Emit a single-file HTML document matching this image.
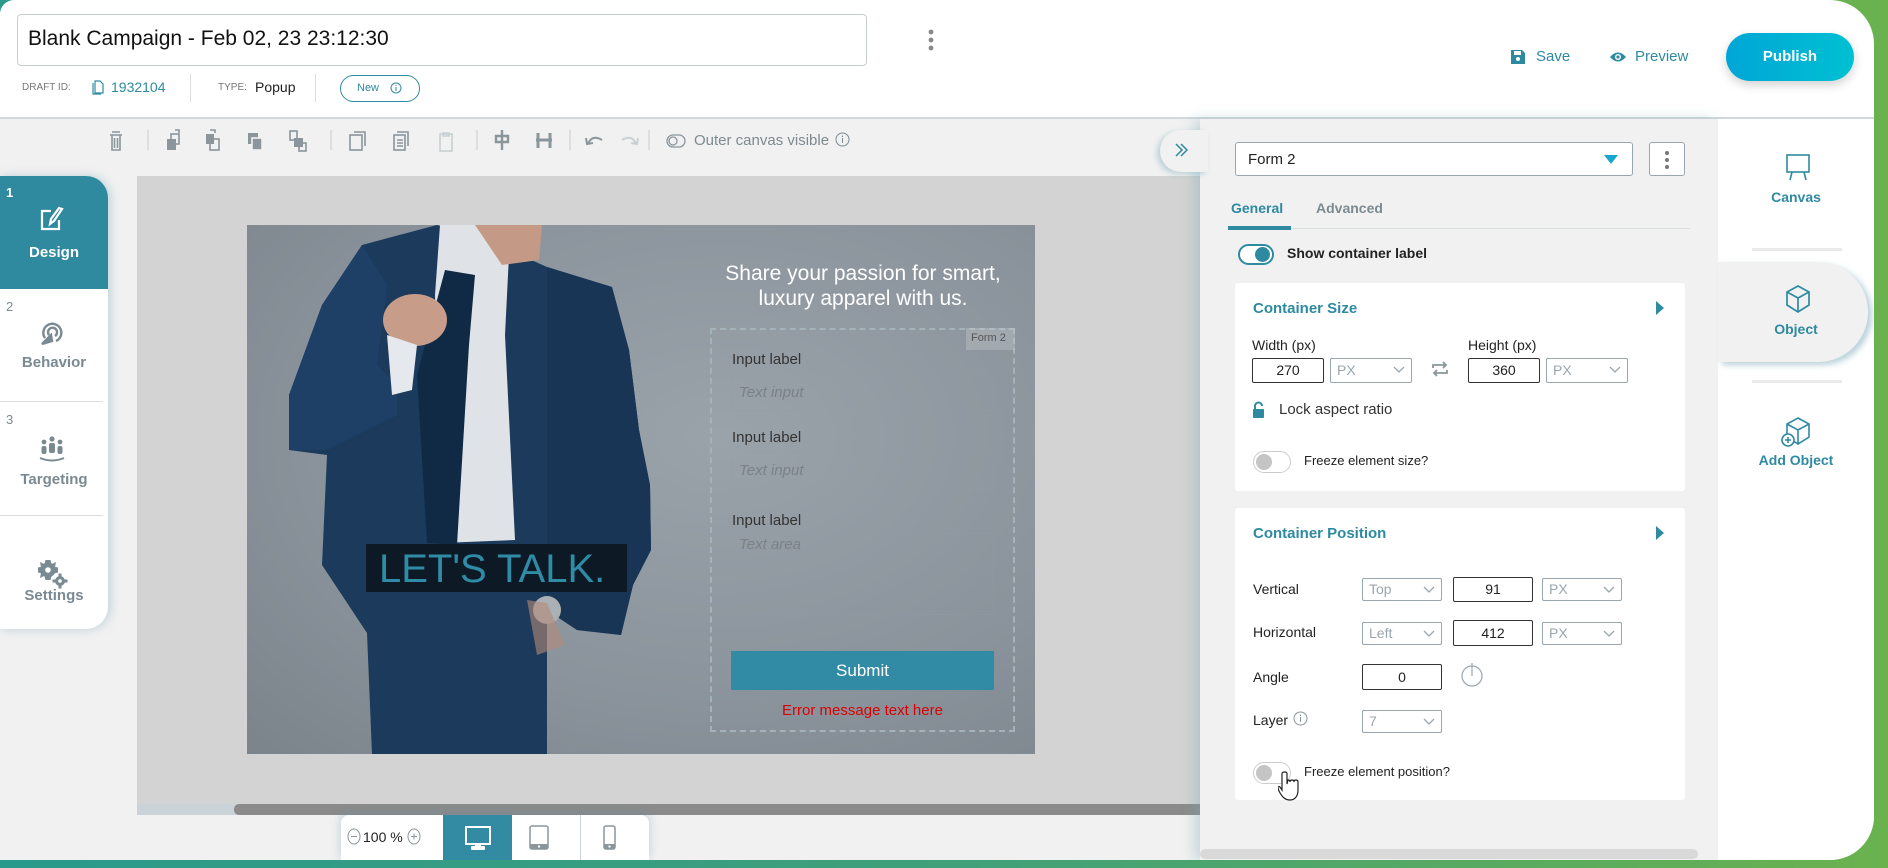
<!DOCTYPE html>
<html><head><meta charset="utf-8">
<style>
*{box-sizing:border-box;margin:0;padding:0}
body{width:1888px;height:868px;overflow:hidden;font-family:"Liberation Sans",sans-serif;background:linear-gradient(90deg,#2a9a8c 0%,#3fa07a 50%,#6bb24f 100%);position:relative}
.a{position:absolute}
#card{position:absolute;left:0;top:0;width:1874px;height:860px;background:#fff;border-radius:14px 44px 44px 0;overflow:hidden}
.t{position:absolute;white-space:nowrap}
.lbl{font-size:14px;color:#222}
.box{position:absolute;border:1px solid #333;border-radius:2px;background:#fff;font-size:14px;text-align:center;color:#222}
.sel{position:absolute;border:1px solid #9aa6ad;border-radius:2px;background:#fff;font-size:14px;color:#9aa6ad;padding-left:6px}
.sel svg{position:absolute;right:6px;top:7px}
.tog{position:absolute;width:38px;height:22px;border-radius:11px;border:1px solid #ccc;background:#fff}
.tog i{position:absolute;left:2px;top:2px;width:16px;height:16px;border-radius:50%;background:#c5c5c5}
.ic{position:absolute}
</style></head><body>
<div id="card">
<!-- header -->
<div class="a" style="left:17px;top:14px;width:850px;height:52px;border:1px solid #c8cdd0;border-radius:4px"></div>
<div class="t" style="left:28px;top:27px;font-size:21px;color:#111">Blank Campaign - Feb 02, 23 23:12:30</div>
<svg class="ic" style="left:926px;top:28px" width="10" height="24"><circle cx="5" cy="4" r="2.4" fill="#888"/><circle cx="5" cy="12" r="2.4" fill="#888"/><circle cx="5" cy="20" r="2.4" fill="#888"/></svg>
<div class="t" style="left:22px;top:82px;font-size:10px;color:#777">DRAFT ID:</div>
<svg class="ic" style="left:92px;top:80px" width="12" height="15"><path d="M3 1h5l3 3v9H3z M1 3v11h8" fill="none" stroke="#2e8aa1" stroke-width="1.2"/></svg>
<div class="t" style="left:111px;top:79px;font-size:14px;color:#2e8aa1">1932104</div>
<div class="a" style="left:190px;top:74px;width:1px;height:28px;background:#ddd"></div>
<div class="t" style="left:218px;top:82px;font-size:10px;color:#777">TYPE:</div>
<div class="t" style="left:255px;top:79px;font-size:14px;color:#222">Popup</div>
<div class="a" style="left:315px;top:74px;width:1px;height:28px;background:#ddd"></div>
<div class="a" style="left:340px;top:75px;width:80px;height:27px;border:1px solid #2e8aa1;border-radius:14px"></div>
<div class="t" style="left:357px;top:82px;font-size:11px;color:#2e8aa1">New</div>
<svg class="ic" style="left:390px;top:82px" width="12" height="12"><circle cx="6" cy="6" r="5" fill="none" stroke="#2e8aa1"/><path d="M6 5v4M6 3v1" stroke="#2e8aa1"/></svg>
<svg class="ic" style="left:1510px;top:49px" width="16" height="16"><path d="M1 1h11l3 3v11H1z" fill="#2e8aa1"/><rect x="4" y="2" width="7" height="4" fill="#fff"/><circle cx="8" cy="10" r="2" fill="#fff"/></svg>
<div class="t" style="left:1536px;top:48px;font-size:15px;color:#2e8aa1">Save</div>
<svg class="ic" style="left:1609px;top:51px" width="18" height="12"><path d="M1 6Q9 -3 17 6Q9 15 1 6z" fill="#2e8aa1"/><circle cx="9" cy="6" r="3" fill="#fff"/><circle cx="9" cy="6" r="1.6" fill="#2e8aa1"/></svg>
<div class="t" style="left:1635px;top:48px;font-size:15px;color:#2e8aa1">Preview</div>
<div class="a" style="left:1726px;top:33px;width:128px;height:48px;border-radius:24px;background:linear-gradient(90deg,#00a6d6,#00c0d2);box-shadow:0 4px 10px rgba(0,0,0,.18)"></div>
<div class="t" style="left:1726px;top:48px;width:128px;text-align:center;font-size:15px;font-weight:bold;color:#fff">Publish</div>
<div class="a" style="left:0;top:117px;width:1874px;height:2px;background:#d0d8dc"></div>

<!-- main area -->
<div class="a" style="left:0;top:119px;width:1200px;height:741px;background:#f1f1f1"></div>
<svg class="a" style="left:100px;top:128px" width="760" height="26" fill="none" stroke="#8a969c" stroke-width="1.6">
<path d="M12 4h8M10 7h12M12 7v15h8V7M14.5 10v10M17.5 10v10"/>
<path d="M48 2v20" stroke="#ccc" stroke-width="1"/>
<rect x="67" y="11" width="9" height="11" fill="#8a969c" stroke="none"/><rect x="71" y="6" width="8" height="10"/><path d="M75 2h4v3"/>
<rect x="110" y="11" width="9" height="11"/><rect x="106" y="6" width="8" height="10" fill="#8a969c" stroke="none"/><path d="M110 2h5v3"/>
<rect x="148" y="5" width="10" height="11" fill="#8a969c" stroke="none"/><rect x="152" y="10" width="10" height="12" fill="#8a969c" stroke="#f1f1f1"/>
<rect x="190" y="3" width="7" height="9"/><rect x="194" y="10" width="9" height="9" fill="#8a969c" stroke="none"/><rect x="199" y="15" width="7" height="8"/>
<path d="M231 2v20" stroke="#ccc" stroke-width="1"/>
<rect x="250" y="7" width="12" height="15"/><path d="M254 4h11v14"/>
<rect x="294" y="7" width="11" height="15"/><path d="M297 4h11v14M297 12h6M297 15h6M297 18h6"/>
<rect x="340" y="6" width="12" height="17" stroke="#c9d0d3"/><path d="M343 5h6v3h-6z" stroke="#c9d0d3"/>
<path d="M377 2v20" stroke="#ccc" stroke-width="1"/>
<path d="M402 2v20M396 8h12v6h-12z" stroke-width="2.4"/>
<path d="M438 5v15M450 5v15M436 12h16" stroke-width="3"/>
<path d="M470 2v20" stroke="#ccc" stroke-width="1"/>
<path d="M488 16q4-10 14-4M486 10l1 6 6-1" stroke-width="2"/>
<path d="M536 16q-4-10-14-4M538 10l-1 6-6-1" stroke="#c9d0d3" stroke-width="2"/>
<path d="M549 2v20" stroke="#ccc" stroke-width="1"/>
</svg>
<svg class="ic" style="left:666px;top:133px" width="20" height="16"><rect x="1" y="2" width="18" height="12" rx="6" fill="none" stroke="#8a969c" stroke-width="1.3"/><circle cx="7" cy="8" r="4" fill="none" stroke="#8a969c" stroke-width="1.3"/></svg>
<div class="t" style="left:694px;top:132px;font-size:15px;color:#7d8a90">Outer canvas visible</div>
<svg class="ic" style="left:835px;top:132px" width="15" height="15"><circle cx="7.5" cy="7.5" r="6.5" fill="none" stroke="#7d8a90"/><path d="M7.5 6v5M7.5 3.5v1.5" stroke="#7d8a90"/></svg>

<!-- canvas -->
<div class="a" style="left:137px;top:176px;width:1063px;height:628px;background:#d3d3d3"></div>
<div class="a" style="left:137px;top:804px;width:1063px;height:11px;background:#c9d3d8"></div>
<div class="a" style="left:234px;top:804px;width:966px;height:11px;background:#8b8b8b;border-radius:5px 0 0 5px"></div>

<!-- popup -->
<div class="a" style="left:247px;top:225px;width:788px;height:529px;overflow:hidden;background:radial-gradient(ellipse at 60% 40%,#9aa2aa 0%,#8a939b 60%,#7b838b 100%)">
<svg class="a" style="left:0;top:0" width="788" height="529">
<path d="M115 20L190 0L262 25L300 42L365 62L382 125L392 205L403 260L404 325L386 360L374 410L330 405L300 385L300 529L125 529L120 408L75 340L80 230L42 225L42 170L75 80Z" fill="#1b3a5c"/>
<path d="M42 170L75 80L115 20L140 60L130 140L150 160L150 190L80 225L42 225Z" fill="#1e4067"/>
<path d="M300 42L365 62L382 125L392 205L403 260L404 325L386 360L374 410L330 405L300 385Z" fill="#193555"/>
<path d="M193 0L245 0L262 30L258 110L268 315L195 318L188 70Z" fill="#dfe3e8"/>
<path d="M198 45L228 50L222 120L210 320L180 318L170 150Z" fill="#102a45"/>
<path d="M228 0L295 0L292 35L255 40Z" fill="#c49a86"/>
<ellipse cx="168" cy="95" rx="32" ry="26" fill="#c79c88"/>
<path d="M140 110L170 120L165 165L145 170Z" fill="#e5e8ec"/>
<ellipse cx="300" cy="385" rx="14" ry="14" fill="#aab0b4"/>
<path d="M280 375L300 378L318 420L290 430Z" fill="#b48a78" opacity=".6"/>
</svg>
<div class="a" style="left:119px;top:319px;width:261px;height:48px;background:#0d1a26"></div>
<div class="t" style="left:132px;top:322px;font-size:40px;color:#2f8ba6;letter-spacing:0px">LET'S TALK.</div>
<div class="t" style="left:456px;top:36px;width:320px;text-align:center;font-size:21px;line-height:25px;color:#fff">Share your passion for smart,<br>luxury apparel with us.</div>
<div class="a" style="left:463px;top:103px;width:305px;height:404px;border:2px dashed #a4b2ba"></div>
<div class="a" style="left:719px;top:103px;width:49px;height:22px;background:rgba(200,205,210,.35)"></div>
<div class="t" style="left:724px;top:107px;font-size:11px;color:#555">Form 2</div>
<div class="t" style="left:485px;top:126px;font-size:15px;color:#333">Input label</div>
<div class="a" style="left:485px;top:147px;width:262px;height:39px;border:1px solid rgba(140,160,170,.35)"></div>
<div class="t" style="left:492px;top:159px;font-size:15px;font-style:italic;color:#7a8288">Text input</div>
<div class="t" style="left:485px;top:204px;font-size:15px;color:#333">Input label</div>
<div class="a" style="left:485px;top:226px;width:262px;height:39px;border:1px solid rgba(140,160,170,.35)"></div>
<div class="t" style="left:492px;top:237px;font-size:15px;font-style:italic;color:#7a8288">Text input</div>
<div class="t" style="left:485px;top:287px;font-size:15px;color:#333">Input label</div>
<div class="a" style="left:485px;top:308px;width:262px;height:82px;border:1px solid rgba(140,160,170,.35)"></div>
<div class="t" style="left:492px;top:311px;font-size:15px;font-style:italic;color:#7a8288">Text area</div>
<div class="a" style="left:484px;top:426px;width:263px;height:39px;background:#318ba5"></div>
<div class="t" style="left:484px;top:436px;width:263px;text-align:center;font-size:17px;color:#fff">Submit</div>
<div class="t" style="left:463px;top:477px;width:305px;text-align:center;font-size:15px;color:#d00">Error message text here</div>
</div>

<!-- left nav -->
<div class="a" style="left:0;top:176px;width:108px;height:453px;background:#fff;border-radius:0 22px 22px 0;box-shadow:2px 0 10px rgba(90,150,170,.35);overflow:hidden">
<div class="a" style="left:0;top:0;width:108px;height:113px;background:#2f8aa0"></div>
<div class="t" style="left:6px;top:9px;font-size:13px;font-weight:bold;color:#fff">1</div>
<svg class="ic" style="left:37px;top:30px" width="30" height="30" fill="none" stroke="#fff" stroke-width="2.2"><path d="M14 5H5v18h17v-9"/><path d="M25 3l-8 12-4 3 1-5 8-11z"/></svg>
<div class="t" style="left:0;top:68px;width:108px;text-align:center;font-size:15px;font-weight:bold;color:#fff">Design</div>
<div class="t" style="left:6px;top:123px;font-size:13px;color:#7a8a92">2</div>
<svg class="ic" style="left:39px;top:144px" width="26" height="26" fill="none" stroke="#7a8a92" stroke-width="2.4"><path d="M6 18A9 9 0 1 1 17 21"/><path d="M10 15A4.5 4.5 0 1 1 16 16"/><path d="M3 24l9-9 1 6z" fill="#7a8a92"/></svg>
<div class="t" style="left:0;top:178px;width:108px;text-align:center;font-size:15px;font-weight:bold;color:#7a8a92">Behavior</div>
<div class="a" style="left:0;top:225px;width:103px;height:1px;background:#ddd"></div>
<div class="t" style="left:6px;top:236px;font-size:13px;color:#7a8a92">3</div>
<svg class="ic" style="left:38px;top:260px" width="28" height="26" fill="#7a8a92"><circle cx="14" cy="3" r="2.6"/><circle cx="6" cy="6" r="2.4"/><circle cx="22" cy="6" r="2.4"/><rect x="11" y="7" width="6" height="10" rx="2"/><rect x="3.5" y="10" width="5" height="8" rx="2"/><rect x="19.5" y="10" width="5" height="8" rx="2"/><path d="M2 22q12 5 24 0" fill="none" stroke="#7a8a92" stroke-width="2"/></svg>
<div class="t" style="left:0;top:295px;width:108px;text-align:center;font-size:15px;font-weight:bold;color:#7a8a92">Targeting</div>
<div class="a" style="left:0;top:339px;width:103px;height:1px;background:#ddd"></div>
<svg class="ic" style="left:36px;top:383px" width="32" height="30" fill="#7a8a92"><circle cx="12" cy="11" r="7.5"/><circle cx="12" cy="11" r="2.8" fill="#fff"/><path d="M9.5 1h5l1 4h-7zM9.5 21h5l1-4h-7zM2 8.5v5l4 1v-7zM22 8.5v5l-4 1v-7zM4 3l4 2-3 3zM20 3l-4 2 3 3zM4 19l4-2-3-3z"/><circle cx="24" cy="22" r="5"/><circle cx="24" cy="22" r="1.8" fill="#fff"/><path d="M22.5 14.5h3v3h-3zM22.5 26.5h3v3h-3zM16.5 20.5h3v3h-3zM28.5 20.5h3v3h-3z"/></svg>
<div class="t" style="left:0;top:411px;width:108px;text-align:center;font-size:15px;font-weight:bold;color:#7a8a92">Settings</div>
</div>

<!-- bottom device bar -->
<div class="a" style="left:341px;top:815px;width:308px;height:45px;background:#fff;border-radius:8px 8px 0 0;box-shadow:0 -2px 10px rgba(90,140,160,.35);overflow:hidden">
<svg class="ic" style="left:6px;top:13px" width="14" height="17"><ellipse cx="7" cy="8.5" rx="6" ry="7.5" fill="none" stroke="#8a969c"/><path d="M4 8.5h6" stroke="#8a969c"/></svg>
<div class="t" style="left:22px;top:14px;font-size:14px;color:#222">100 %</div>
<svg class="ic" style="left:66px;top:13px" width="14" height="17"><ellipse cx="7" cy="8.5" rx="6" ry="7.5" fill="none" stroke="#8a969c"/><path d="M4 8.5h6M7 5.5v6" stroke="#8a969c"/></svg>
<div class="a" style="left:102px;top:0;width:69px;height:45px;background:#338aa3"></div>
<svg class="ic" style="left:123px;top:11px" width="28" height="25"><rect x="2" y="1" width="24" height="17" fill="none" stroke="#fff" stroke-width="2"/><rect x="11" y="18" width="6" height="3" fill="#fff"/><rect x="7" y="20" width="14" height="4" rx="1" fill="#fff"/></svg>
<svg class="ic" style="left:186px;top:10px" width="24" height="25"><rect x="3" y="1" width="18" height="23" rx="2" fill="none" stroke="#8a969c" stroke-width="1.5"/><rect x="3" y="19" width="18" height="5" fill="#8a969c"/><rect x="11" y="20.5" width="2" height="2" fill="#fff"/></svg>
<div class="a" style="left:239px;top:0;width:1px;height:45px;background:#c9d3d8"></div>
<svg class="ic" style="left:261px;top:10px" width="16" height="25"><rect x="2" y="1" width="11" height="23" rx="2" fill="none" stroke="#8a969c" stroke-width="1.5"/><rect x="2" y="19" width="11" height="5" fill="#8a969c"/><rect x="6.5" y="20.5" width="2" height="2" fill="#fff"/></svg>
</div>

<!-- right panel -->
<div class="a" style="left:1200px;top:119px;width:518px;height:741px;background:#f1f1f1;box-shadow:-6px 0 12px rgba(120,170,185,.35)"></div>
<div class="a" style="left:1160px;top:130px;width:48px;height:42px;background:#f1f1f1;border-radius:21px 0 0 21px;box-shadow:-3px 2px 6px rgba(120,170,185,.45)"></div>
<svg class="ic" style="left:1173px;top:142px" width="16" height="16" fill="none" stroke="#2e8aa1" stroke-width="1.5"><path d="M3 2l6 6-6 6M8 2l6 6-6 6"/></svg>
<div class="a" style="left:1235px;top:142px;width:398px;height:34px;border:1px solid #9aa6ad;border-radius:3px;background:#fff"></div>
<div class="t" style="left:1248px;top:151px;font-size:15px;color:#222">Form 2</div>
<svg class="ic" style="left:1604px;top:155px" width="14" height="9"><path d="M0 0h14L7 9z" fill="#17a6d1"/></svg>
<div class="a" style="left:1649px;top:142px;width:36px;height:34px;border:1px solid #9aa6ad;border-radius:3px;background:#fff"></div>
<svg class="ic" style="left:1664px;top:150px" width="6" height="20" fill="#777"><circle cx="3" cy="3" r="2"/><circle cx="3" cy="10" r="2"/><circle cx="3" cy="17" r="2"/></svg>
<div class="t" style="left:1231px;top:200px;font-size:14px;font-weight:bold;color:#2e8aa1">General</div>
<div class="t" style="left:1316px;top:200px;font-size:14px;font-weight:bold;color:#7d8a90">Advanced</div>
<div class="a" style="left:1228px;top:228px;width:462px;height:1px;background:#d8dde0"></div>
<div class="a" style="left:1228px;top:226px;width:63px;height:4px;background:#2e8aa1"></div>
<div class="a" style="left:1238px;top:244px;width:36px;height:21px;border-radius:11px;border:2px solid #2e8aa1;background:#fff"></div>
<div class="a" style="left:1255px;top:247px;width:15px;height:15px;border-radius:50%;background:#2e8aa1"></div>
<div class="t" style="left:1287px;top:245px;font-size:14px;font-weight:bold;color:#222">Show container label</div>

<div class="a" style="left:1235px;top:283px;width:450px;height:208px;background:#fff;border-radius:3px"></div>
<div class="t" style="left:1253px;top:300px;font-size:15px;font-weight:bold;color:#2e8aa1">Container Size</div>
<svg class="ic" style="left:1656px;top:301px" width="8" height="14"><path d="M0 0l8 7-8 7z" fill="#2e8aa1"/></svg>
<div class="t lbl" style="left:1252px;top:337px">Width (px)</div>
<div class="t lbl" style="left:1468px;top:337px">Height (px)</div>
<div class="box" style="left:1252px;top:358px;width:72px;height:25px;line-height:23px">270</div>
<div class="sel" style="left:1330px;top:358px;width:82px;height:25px;line-height:23px">PX<svg width="12" height="8"><path d="M1 1l5 5 5-5" fill="none" stroke="#9aa6ad" stroke-width="1.3"/></svg></div>
<svg class="ic" style="left:1431px;top:360px" width="18" height="18" fill="none" stroke="#8a969c" stroke-width="1.8"><path d="M2 8V5h13M12 2l3 3-3 3M16 10v3H3M6 16l-3-3 3-3"/></svg>
<div class="box" style="left:1468px;top:358px;width:72px;height:25px;line-height:23px">360</div>
<div class="sel" style="left:1546px;top:358px;width:82px;height:25px;line-height:23px">PX<svg width="12" height="8"><path d="M1 1l5 5 5-5" fill="none" stroke="#9aa6ad" stroke-width="1.3"/></svg></div>
<svg class="ic" style="left:1252px;top:401px" width="13" height="18"><path d="M3 8V5a3.5 3.5 0 0 1 7 0" fill="none" stroke="#2e8aa1" stroke-width="2"/><rect x="1" y="8" width="11" height="9" rx="1" fill="#2e8aa1"/></svg>
<div class="t" style="left:1279px;top:401px;font-size:15px;color:#333">Lock aspect ratio</div>
<div class="tog" style="left:1253px;top:451px"><i></i></div>
<div class="t" style="left:1304px;top:453px;font-size:13px;color:#222">Freeze element size?</div>

<div class="a" style="left:1235px;top:508px;width:450px;height:292px;background:#fff;border-radius:3px"></div>
<div class="t" style="left:1253px;top:525px;font-size:15px;font-weight:bold;color:#2e8aa1">Container Position</div>
<svg class="ic" style="left:1656px;top:526px" width="8" height="14"><path d="M0 0l8 7-8 7z" fill="#2e8aa1"/></svg>
<div class="t lbl" style="left:1253px;top:581px">Vertical</div>
<div class="sel" style="left:1362px;top:578px;width:80px;height:23px;line-height:21px">Top<svg width="12" height="8"><path d="M1 1l5 5 5-5" fill="none" stroke="#9aa6ad" stroke-width="1.3"/></svg></div>
<div class="box" style="left:1453px;top:577px;width:80px;height:25px;line-height:23px">91</div>
<div class="sel" style="left:1542px;top:578px;width:80px;height:23px;line-height:21px">PX<svg width="12" height="8"><path d="M1 1l5 5 5-5" fill="none" stroke="#9aa6ad" stroke-width="1.3"/></svg></div>
<div class="t lbl" style="left:1253px;top:624px">Horizontal</div>
<div class="sel" style="left:1362px;top:622px;width:80px;height:23px;line-height:21px">Left<svg width="12" height="8"><path d="M1 1l5 5 5-5" fill="none" stroke="#9aa6ad" stroke-width="1.3"/></svg></div>
<div class="box" style="left:1453px;top:620px;width:80px;height:26px;line-height:24px">412</div>
<div class="sel" style="left:1542px;top:622px;width:80px;height:23px;line-height:21px">PX<svg width="12" height="8"><path d="M1 1l5 5 5-5" fill="none" stroke="#9aa6ad" stroke-width="1.3"/></svg></div>
<div class="t lbl" style="left:1253px;top:669px">Angle</div>
<div class="box" style="left:1362px;top:664px;width:80px;height:26px;line-height:24px">0</div>
<svg class="ic" style="left:1460px;top:662px" width="24" height="26"><circle cx="12" cy="14" r="10" fill="none" stroke="#9aa6ad" stroke-width="1.2"/><path d="M12 1v13" stroke="#9aa6ad" stroke-width="1.2"/></svg>
<div class="t lbl" style="left:1253px;top:712px">Layer</div>
<svg class="ic" style="left:1293px;top:711px" width="15" height="15"><circle cx="7.5" cy="7.5" r="6.5" fill="none" stroke="#8a969c"/><path d="M7.5 6v5M7.5 3.5v1.5" stroke="#8a969c"/></svg>
<div class="sel" style="left:1362px;top:710px;width:80px;height:23px;line-height:21px">7<svg width="12" height="8"><path d="M1 1l5 5 5-5" fill="none" stroke="#9aa6ad" stroke-width="1.3"/></svg></div>
<div class="tog" style="left:1253px;top:762px"><i></i></div>
<div class="t" style="left:1304px;top:764px;font-size:13px;color:#222">Freeze element position?</div>
<svg class="ic" style="left:1278px;top:770px" width="24" height="34"><path d="M7 2c1.5 0 2 1 2 2v10l1-4c1.5 0 2 1 2 2 0-1 .5-2 2-2s2 1 2 2c0-1 .5-2 2-2s2 1 2 2v8c0 6-3 10-8 10s-8-3-11-9l-1-3c0-1 1-2 2-1l2 3V4c0-1 .5-2 2-2z" fill="#fff" stroke="#222" stroke-width="1.2"/></svg>
<div class="a" style="left:1200px;top:849px;width:498px;height:10px;background:#d9d9d9;border-radius:5px"></div>

<!-- far right nav -->
<div class="a" style="left:1718px;top:119px;width:156px;height:741px;background:#fff"></div>
<svg class="ic" style="left:1785px;top:153px" width="26" height="30" fill="none" stroke="#2e8aa1" stroke-width="1.6"><rect x="2" y="2" width="22" height="17"/><path d="M7 19l-2 8M19 19l2 8"/></svg>
<div class="t" style="left:1718px;top:189px;width:156px;text-align:center;font-size:14px;font-weight:bold;color:#2e8aa1">Canvas</div>
<div class="a" style="left:1752px;top:248px;width:90px;height:3px;background:#eaeaea"></div>
<div class="a" style="left:1718px;top:262px;width:150px;height:100px;background:#f1f1f1;border-radius:0 50px 50px 0;box-shadow:4px 3px 6px rgba(120,170,185,.5)"></div>
<svg class="ic" style="left:1784px;top:284px" width="28" height="30" fill="none" stroke="#2e8aa1" stroke-width="1.7"><path d="M14 2l11 6v13l-11 7-11-7V8zM3 8l11 6 11-6M14 14v14"/></svg>
<div class="t" style="left:1718px;top:321px;width:156px;text-align:center;font-size:14px;font-weight:bold;color:#2e8aa1">Object</div>
<div class="a" style="left:1752px;top:380px;width:90px;height:3px;background:#eaeaea"></div>
<svg class="ic" style="left:1780px;top:416px" width="32" height="34" fill="none" stroke="#2e8aa1" stroke-width="1.6"><path d="M18 2l11 6v13l-11 7-11-7V8zM7 8l11 6 11-6M18 14v14"/><circle cx="8" cy="24" r="6" fill="#fff"/><path d="M8 21v6M5 24h6"/></svg>
<div class="t" style="left:1718px;top:452px;width:156px;text-align:center;font-size:14px;font-weight:bold;color:#2e8aa1">Add Object</div>
</div>
</body></html>
